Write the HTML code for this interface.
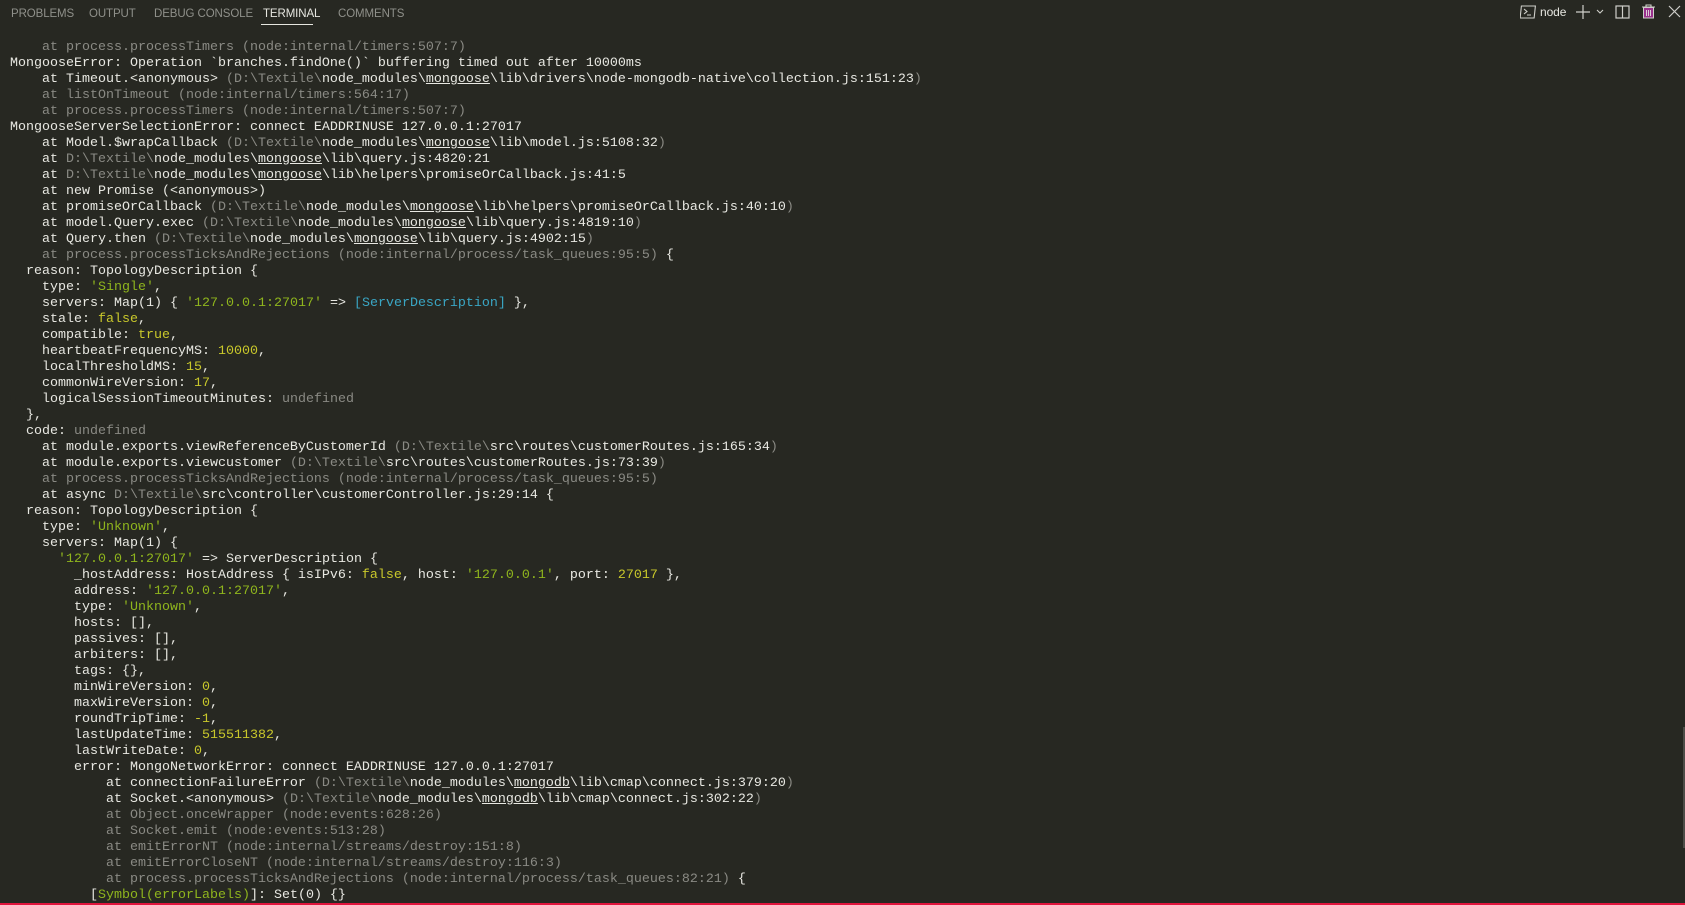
<!DOCTYPE html>
<html><head><meta charset="utf-8"><style>
html,body{margin:0;padding:0;width:1685px;height:905px;overflow:hidden;background:#272822;}
.tabs{position:absolute;top:0;left:0;width:1685px;height:28px;font-family:"Liberation Sans",sans-serif;font-size:11.5px;color:#8f908a;}
.tabs span{position:absolute;top:8px;letter-spacing:-0.1px}
.tabs .act{color:#e6e6e0}
.ul{position:absolute;left:261px;top:24px;width:52px;height:1px;background:#e6e6e0}
pre{position:absolute;left:10px;top:40px;margin:0;font-family:"Liberation Mono",monospace;font-size:13.33px;line-height:16px;color:#e8e8e2;white-space:pre;}
.d{color:#8a8a84}.g{color:#8fb51d}.y{color:#c9c82b}.c{color:#3aa6c4}.u{text-decoration:underline}
.sb{position:absolute;left:1683px;top:727px;width:2px;height:121px;background:#4d4d48}
.red{position:absolute;left:0;top:903px;width:1685px;height:2px;background:#e0143c}
svg{position:absolute}
</style></head><body>
<div class="tabs">
<span style="left:11px">PROBLEMS</span>
<span style="left:89px">OUTPUT</span>
<span style="left:154px">DEBUG CONSOLE</span>
<span style="left:263px" class="act">TERMINAL</span>
<span style="left:338px">COMMENTS</span>
<span style="left:1540px;top:5px;font-size:12px" class="act">node</span>
</div>
<div class="ul"></div>
<svg style="left:1520px;top:5px" width="17" height="14" viewBox="0 0 17 14"><rect x="1.5" y="1" width="14" height="12" fill="none" stroke="#cfcfca" stroke-width="1.1" transform="skewX(-6)"/><path d="M4 4l3 2.5-3 2.5M7 10h4" fill="none" stroke="#cfcfca" stroke-width="1.1"/></svg>
<svg style="left:1575px;top:5px" width="32" height="14" viewBox="0 0 32 14"><path d="M8 0v14M1 7h14" stroke="#cfcfca" stroke-width="1.2"/><path d="M22 5l3 3 3-3" fill="none" stroke="#cfcfca" stroke-width="1.1"/></svg>
<svg style="left:1615px;top:5px" width="16" height="14" viewBox="0 0 16 14"><rect x="1" y="1" width="13" height="12" fill="none" stroke="#cfcfca" stroke-width="1.2"/><path d="M7.5 1v12" stroke="#cfcfca" stroke-width="1.2"/></svg>
<svg style="left:1641px;top:4px" width="15" height="15" viewBox="0 0 15 15"><path d="M1 3h13M5 3V1h5v2" fill="none" stroke="#cfcfca" stroke-width="1.1"/><rect x="2.5" y="3.5" width="10" height="10.5" fill="#9a2f8c" stroke="#cfcfca" stroke-width="1"/><path d="M5.5 6v6M7.5 6v6M9.5 6v6" stroke="#e0e0e0" stroke-width="0.9"/></svg>
<svg style="left:1668px;top:5px" width="13" height="13" viewBox="0 0 13 13"><path d="M1 1l11 11M12 1L1 12" stroke="#cfcfca" stroke-width="1.2"/></svg>
<pre><span class="d">    at process.processTimers (node:internal/timers:507:7)</span>
MongooseError: Operation `branches.findOne()` buffering timed out after 10000ms
    at Timeout.&lt;anonymous&gt; <span class="d">(D:\Textile\</span>node_modules\<span class="u">mongoose</span>\lib\drivers\node-mongodb-native\collection.js:151:23<span class="d">)</span>
<span class="d">    at listOnTimeout (node:internal/timers:564:17)</span>
<span class="d">    at process.processTimers (node:internal/timers:507:7)</span>
MongooseServerSelectionError: connect EADDRINUSE 127.0.0.1:27017
    at Model.$wrapCallback <span class="d">(D:\Textile\</span>node_modules\<span class="u">mongoose</span>\lib\model.js:5108:32<span class="d">)</span>
    at <span class="d">D:\Textile\</span>node_modules\<span class="u">mongoose</span>\lib\query.js:4820:21
    at <span class="d">D:\Textile\</span>node_modules\<span class="u">mongoose</span>\lib\helpers\promiseOrCallback.js:41:5
    at new Promise (&lt;anonymous&gt;)
    at promiseOrCallback <span class="d">(D:\Textile\</span>node_modules\<span class="u">mongoose</span>\lib\helpers\promiseOrCallback.js:40:10<span class="d">)</span>
    at model.Query.exec <span class="d">(D:\Textile\</span>node_modules\<span class="u">mongoose</span>\lib\query.js:4819:10<span class="d">)</span>
    at Query.then <span class="d">(D:\Textile\</span>node_modules\<span class="u">mongoose</span>\lib\query.js:4902:15<span class="d">)</span>
<span class="d">    at process.processTicksAndRejections (node:internal/process/task_queues:95:5)</span> {
  reason: TopologyDescription {
    type: <span class="g">'Single'</span>,
    servers: Map(1) { <span class="g">'127.0.0.1:27017'</span> =&gt; <span class="c">[ServerDescription]</span> },
    stale: <span class="y">false</span>,
    compatible: <span class="y">true</span>,
    heartbeatFrequencyMS: <span class="y">10000</span>,
    localThresholdMS: <span class="y">15</span>,
    commonWireVersion: <span class="y">17</span>,
    logicalSessionTimeoutMinutes: <span class="d">undefined</span>
  },
  code: <span class="d">undefined</span>
    at module.exports.viewReferenceByCustomerId <span class="d">(D:\Textile\</span>src\routes\customerRoutes.js:165:34<span class="d">)</span>
    at module.exports.viewcustomer <span class="d">(D:\Textile\</span>src\routes\customerRoutes.js:73:39<span class="d">)</span>
<span class="d">    at process.processTicksAndRejections (node:internal/process/task_queues:95:5)</span>
    at async <span class="d">D:\Textile\</span>src\controller\customerController.js:29:14 {
  reason: TopologyDescription {
    type: <span class="g">'Unknown'</span>,
    servers: Map(1) {
      <span class="g">'127.0.0.1:27017'</span> =&gt; ServerDescription {
        _hostAddress: HostAddress { isIPv6: <span class="y">false</span>, host: <span class="g">'127.0.0.1'</span>, port: <span class="y">27017</span> },
        address: <span class="g">'127.0.0.1:27017'</span>,
        type: <span class="g">'Unknown'</span>,
        hosts: [],
        passives: [],
        arbiters: [],
        tags: {},
        minWireVersion: <span class="y">0</span>,
        maxWireVersion: <span class="y">0</span>,
        roundTripTime: <span class="y">-1</span>,
        lastUpdateTime: <span class="y">515511382</span>,
        lastWriteDate: <span class="y">0</span>,
        error: MongoNetworkError: connect EADDRINUSE 127.0.0.1:27017
            at connectionFailureError <span class="d">(D:\Textile\</span>node_modules\<span class="u">mongodb</span>\lib\cmap\connect.js:379:20<span class="d">)</span>
            at Socket.&lt;anonymous&gt; <span class="d">(D:\Textile\</span>node_modules\<span class="u">mongodb</span>\lib\cmap\connect.js:302:22<span class="d">)</span>
<span class="d">            at Object.onceWrapper (node:events:628:26)</span>
<span class="d">            at Socket.emit (node:events:513:28)</span>
<span class="d">            at emitErrorNT (node:internal/streams/destroy:151:8)</span>
<span class="d">            at emitErrorCloseNT (node:internal/streams/destroy:116:3)</span>
<span class="d">            at process.processTicksAndRejections (node:internal/process/task_queues:82:21)</span> {
          [<span class="g">Symbol(errorLabels)</span>]: Set(0) {}</pre>
<div class="sb"></div>
<div class="red"></div>
</body></html>
